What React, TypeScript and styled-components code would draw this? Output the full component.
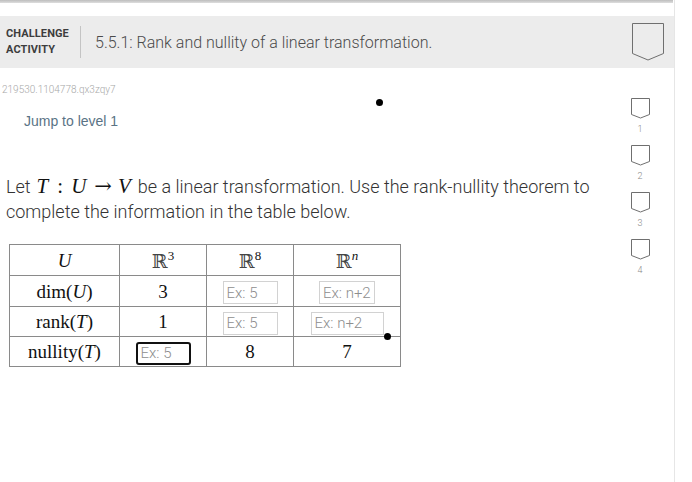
import React from "react";
import styled, { createGlobalStyle } from "styled-components";

const GlobalStyle = createGlobalStyle`
  html, body {
    margin: 0;
    padding: 0;
    background: #ffffff;
  }
  body {
    font-family: Roboto, "Liberation Sans", sans-serif;
    color: #333;
  }
`;

const Page = styled.div`
  position: relative;
  width: 675px;
  min-height: 482px;
  border-right: 1px solid #e6e6e6;
  box-sizing: border-box;
`;

const TopRule = styled.div`
  width: 673px;
  height: 3px;
  background: linear-gradient(#bdbdbd, #dedede);
  margin-bottom: 13px;
`;

const Header = styled.header`
  display: flex;
  align-items: center;
  height: 52px;
  background: #ececec;
  padding: 0 9px 0 6px;
`;

const Kind = styled.div`
  width: 74px;
  font-size: 11px;
  font-weight: 700;
  line-height: 16px;
  color: #3d3d3d;
  letter-spacing: 0.1px;
`;

const Divider = styled.div`
  width: 1px;
  height: 32px;
  background: #c4c4c4;
  margin-right: 14px;
`;

const Title = styled.h1`
  flex: 1;
  margin: 0;
  font-size: 16px;
  font-weight: 300;
  color: #4a4a4a;
`;

const Main = styled.div`
  display: flex;
`;

const Content = styled.div`
  flex: 1;
`;

const ActivityId = styled.div`
  margin: 16px 0 0 2px;
  font-size: 10px;
  line-height: 12px;
  font-weight: 300;
  color: #a8a8a8;
`;

const JumpLink = styled.div`
  margin: 15px 0 0 24px;
  font-family: "Liberation Sans", Arial, sans-serif;
  font-size: 14px;
  line-height: 20px;
  color: #5a7385;
`;

const Prompt = styled.p`
  margin: 43px 0 0 6px;
  width: 600px;
  font-size: 18px;
  font-weight: 300;
  line-height: 25px;
  color: #333;
`;

const Math = styled.span`
  display: inline-block;
  font-family: "Liberation Serif", "DejaVu Serif", serif;
  font-size: 21px;
  line-height: 25px;
  color: #111;
  margin: 0 7px 0 6px;
`;

const Var = styled.i`
  font-style: italic;
`;

const Op = styled.span`
  margin: 0 8px 0 9px;
`;

const Arrow = styled.span`
  font-family: "DejaVu Serif", serif;
  font-size: 21px;
  margin: 0 6px 0 8px;
`;

const Table = styled.table`
  margin: 20px 0 0 9px;
  border-collapse: collapse;
  font-family: "Liberation Serif", "DejaVu Serif", serif;
  font-size: 19px;
  color: #111;
`;

const Cell = styled.td<{ $w: number; $h: number }>`
  width: ${(p) => p.$w}px;
  height: ${(p) => p.$h}px;
  border: 1px solid #8a8a8a;
  padding: 0;
  text-align: center;
  vertical-align: middle;
  box-sizing: border-box;
  line-height: 1;
`;

const Sup = styled.sup`
  font-size: 13px;
  vertical-align: 8px;
`;

const Blackboard = styled.span`
  font-family: "DejaVu Serif", serif;
  font-size: 19px;
  color: #444;
`;

const Answer = styled.input<{ $w: number; $focused?: boolean }>`
  width: ${(p) => p.$w}px;
  height: 23px;
  box-sizing: border-box;
  margin-top: 3px;
  padding: 0 3px;
  border: ${(p) => (p.$focused ? "2px solid #111" : "1px solid #d2d2d2")};
  border-radius: ${(p) => (p.$focused ? "3px" : "0")};
  font-family: Roboto, "Liberation Sans", sans-serif;
  font-size: 15px;
  font-weight: 300;
  outline: none;
  background: #fff;
  vertical-align: middle;

  &::placeholder {
    color: #8e8e8e;
  }
`;

const LevelColumn = styled.div`
  width: 36px;
  margin-right: 16px;
  padding-top: 30px;
  display: flex;
  flex-direction: column;
  align-items: center;
  gap: 9px;
`;

const Level = styled.div`
  display: flex;
  flex-direction: column;
  align-items: center;
`;

const LevelNum = styled.div`
  margin-top: 4px;
  font-size: 9px;
  line-height: 13px;
  font-weight: 300;
  color: #8a8a8a;
`;

const Dot = styled.div<{ $x: number; $y: number }>`
  position: absolute;
  left: ${(p) => p.$x - 3.5}px;
  top: ${(p) => p.$y - 3.5}px;
  width: 7px;
  height: 7px;
  border-radius: 50%;
  background: #000;
`;

function Badge({ big }: { big?: boolean }) {
  if (big) {
    return (
      <svg width="33" height="38" viewBox="0 0 33 38">
        <path d="M0.5 0.5 H31.5 V30.5 L16 37 L0.5 30.5 Z" fill="#ececec" stroke="#6f6f6f" strokeWidth="1" />
      </svg>
    );
  }
  return (
    <svg width="19" height="21" viewBox="0 0 19 21">
      <path d="M0.5 0.5 H18.5 V16.5 L9.5 20 L0.5 16.5 Z" fill="#fff" stroke="#6f6f6f" strokeWidth="1" />
    </svg>
  );
}

const cols = [110, 87, 87, 107];

export default function App() {
  return (
    <Page>
      <GlobalStyle />
      <TopRule />
      <Header>
        <Kind>
          CHALLENGE
          <br />
          ACTIVITY
        </Kind>
        <Divider />
        <Title>5.5.1: Rank and nullity of a linear transformation.</Title>
        <Badge big />
      </Header>
      <Main>
        <Content>
          <ActivityId>219530.1104778.qx3zqy7</ActivityId>
          <JumpLink>Jump to level 1</JumpLink>
          <Prompt>
            Let
            <Math>
              <Var>T</Var>
              <Op>:</Op>
              <Var>U</Var>
              <Arrow>→</Arrow>
              <Var>V</Var>
            </Math>
            be a linear transformation. Use the rank-nullity theorem to
            <br />
            complete the information in the table below.
          </Prompt>
          <Table>
            <tbody>
              <tr>
                <Cell $w={cols[0]} $h={31}>
                  <Var>U</Var>
                </Cell>
                <Cell $w={cols[1]} $h={31}>
                  <Blackboard>ℝ</Blackboard>
                  <Sup>3</Sup>
                </Cell>
                <Cell $w={cols[2]} $h={31}>
                  <Blackboard>ℝ</Blackboard>
                  <Sup>8</Sup>
                </Cell>
                <Cell $w={cols[3]} $h={31}>
                  <Blackboard>ℝ</Blackboard>
                  <Sup>
                    <Var>n</Var>
                  </Sup>
                </Cell>
              </tr>
              <tr>
                <Cell $w={cols[0]} $h={31}>
                  dim(<Var>U</Var>)
                </Cell>
                <Cell $w={cols[1]} $h={31}>3</Cell>
                <Cell $w={cols[2]} $h={31}>
                  <Answer $w={55} placeholder="Ex: 5" readOnly />
                </Cell>
                <Cell $w={cols[3]} $h={31}>
                  <Answer $w={56} placeholder="Ex: n+2" readOnly />
                </Cell>
              </tr>
              <tr>
                <Cell $w={cols[0]} $h={30}>
                  rank(<Var>T</Var>)
                </Cell>
                <Cell $w={cols[1]} $h={30}>1</Cell>
                <Cell $w={cols[2]} $h={30}>
                  <Answer $w={55} placeholder="Ex: 5" readOnly />
                </Cell>
                <Cell $w={cols[3]} $h={30}>
                  <Answer $w={73} placeholder="Ex: n+2" readOnly />
                </Cell>
              </tr>
              <tr>
                <Cell $w={cols[0]} $h={30}>
                  nullity(<Var>T</Var>)
                </Cell>
                <Cell $w={cols[1]} $h={30}>
                  <Answer $w={55} $focused placeholder="Ex: 5" readOnly />
                </Cell>
                <Cell $w={cols[2]} $h={30}>8</Cell>
                <Cell $w={cols[3]} $h={30}>7</Cell>
              </tr>
            </tbody>
          </Table>
        </Content>
        <LevelColumn>
          {[1, 2, 3, 4].map((n) => (
            <Level key={n}>
              <Badge />
              <LevelNum>{n}</LevelNum>
            </Level>
          ))}
        </LevelColumn>
      </Main>
      <Dot $x={379} $y={102} />
      <Dot $x={387} $y={336} />
    </Page>
  );
}
